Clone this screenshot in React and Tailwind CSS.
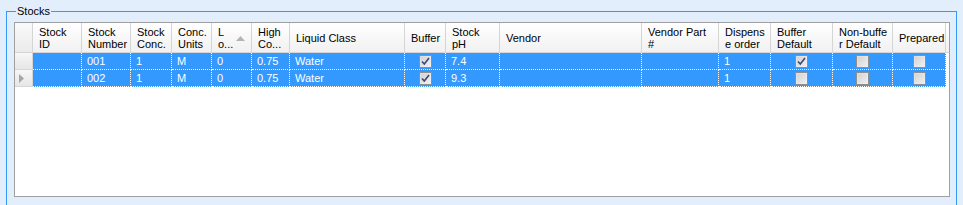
import React from "react";

const cols = [
  { w: "w-[49px]", h: ["Stock", "ID"] },
  { w: "w-[49px]", h: ["Stock", "Number"] },
  { w: "w-[41px]", h: ["Stock", "Conc."] },
  { w: "w-[40px]", h: ["Conc.", "Units"] },
  { w: "w-[40px]", h: ["L", "o..."], sort: true },
  { w: "w-[38px]", h: ["High", "Co..."] },
  { w: "w-[115px]", h: ["Liquid Class"] },
  { w: "w-[41px]", h: ["Buffer"], check: true },
  { w: "w-[54px]", h: ["Stock", "pH"] },
  { w: "w-[142px]", h: ["Vendor"] },
  { w: "w-[77px]", h: ["Vendor Part", "#"] },
  { w: "w-[52px]", h: ["Dispens", "e order"] },
  { w: "w-[62px]", h: ["Buffer", "Default"], check: true },
  { w: "w-[60px]", h: ["Non-buffe", "r Default"], check: true },
  { w: "w-[53px]", h: ["Prepared"], check: true },
];

const rows = [
  ["", "001", "1", "M", "0", "0.75", "Water", true, "7.4", "", "", "1", true, false, false],
  ["", "002", "1", "M", "0", "0.75", "Water", true, "9.3", "", "", "1", false, false, false],
];

function Check({ on }) {
  return (
    <div className="w-[13px] h-[13px] border border-[#8e8f8f] bg-gradient-to-br from-[#dcdcdc] to-[#f0f0f0] flex items-center justify-center">
      <div className="w-[9px] h-[9px] bg-gradient-to-br from-[#d4d4d4] to-[#eeeeee] flex items-center justify-center">
        {on && (
          <svg width="9" height="9" viewBox="0 0 9 9">
            <path d="M1 4.5 L3.3 7 L8 1" fill="none" stroke="#3b4a75" strokeWidth="1.6" />
          </svg>
        )}
      </div>
    </div>
  );
}

export default function App() {
  return (
    <div
      className="w-[963px] h-[205px] overflow-hidden bg-[#e3eefc] text-[11px] text-black"
      style={{ fontFamily: '"Liberation Sans", Arial, sans-serif' }}
    >
      <div className="relative mt-[11px] ml-[6px] w-[951px] h-[210px] border border-[#3399ff] pt-[10px] pl-[7px]">
        <span className="absolute top-[-8px] left-[9px] bg-[#e3eefc] px-[1px] leading-[14px]">Stocks</span>
        <div className="w-[936px] h-[175px] border border-[#a0a0a0] bg-white flex flex-col">
          {/* header */}
          <div className="flex h-[30px] bg-gradient-to-b from-white to-[#f1f1f1] border-b border-[#d5d5d5]">
            <div className="w-[18px] shrink-0 border-r border-[#d5d5d5] bg-gradient-to-b from-[#fafafa] to-[#ebebeb]" />
            {cols.map((c, i) => (
              <div
                key={i}
                className={`${c.w} shrink-0 relative border-r border-[#d5d5d5] flex flex-col justify-center pl-[6px] leading-[12px] whitespace-nowrap overflow-hidden`}
              >
                {c.h.map((t, j) => (
                  <div key={j}>{t}</div>
                ))}
                {c.sort && (
                  <svg className="absolute right-[6px] top-[13px]" width="9" height="5" viewBox="0 0 9 5">
                    <path d="M0 5 L4.5 0 L9 5 Z" fill="#b4b4b4" />
                  </svg>
                )}
              </div>
            ))}
            <div className="flex-1" />
          </div>
          {/* rows */}
          {rows.map((r, ri) => (
            <div key={ri} className="flex h-[17px]">
              <div className="w-[18px] shrink-0 border-r border-b border-[#d5d5d5] bg-gradient-to-b from-[#f7f7f7] to-[#e6e6e6] flex items-center pl-[4px]">
                {ri === 1 && (
                  <svg width="6" height="9" viewBox="0 0 6 9">
                    <path d="M0 0 L5 4.5 L0 9 Z" fill="#a6a6a6" />
                  </svg>
                )}
              </div>
              {cols.map((c, i) => {
                const v = r[i];
                return (
                  <div
                    key={i}
                    className={`${c.w} shrink-0 bg-[#3399ff] text-white border-r border-b border-dotted border-white flex items-center whitespace-nowrap overflow-hidden ${
                      c.check ? "justify-center" : "pl-[5px]"
                    }`}
                  >
                    {c.check ? <Check on={v} /> : v}
                  </div>
                );
              })}
            </div>
          ))}
        </div>
      </div>
    </div>
  );
}
